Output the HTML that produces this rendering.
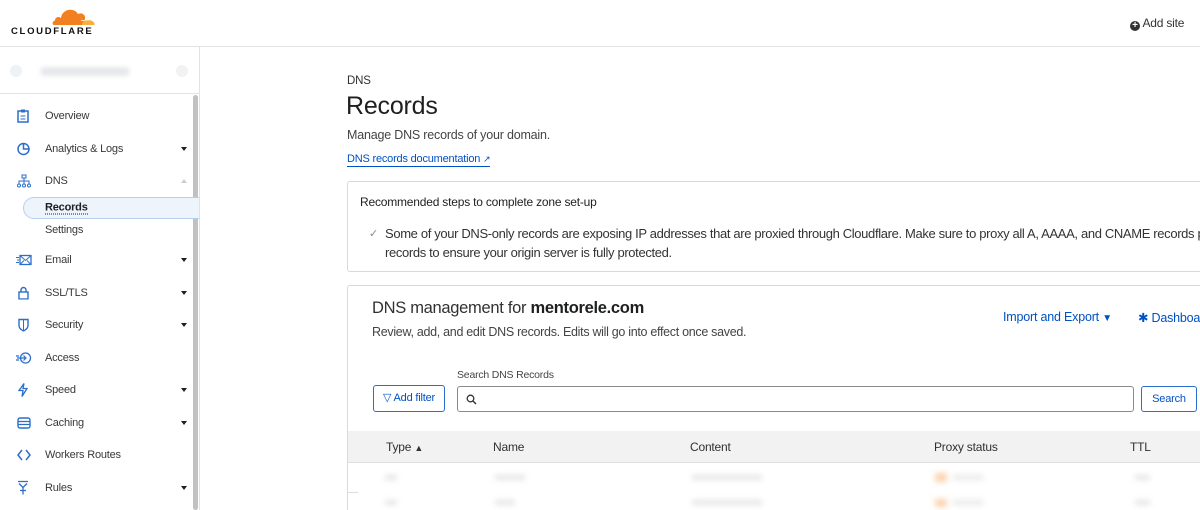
<!DOCTYPE html>
<html><head><meta charset="utf-8"><style>
*{box-sizing:border-box;margin:0;padding:0}
html,body{width:1200px;height:510px;overflow:hidden}
body{background:#fff;font-family:"Liberation Sans",sans-serif;color:#313131;position:relative;letter-spacing:-0.2px}
.abs{position:absolute;white-space:nowrap}
.hdr{position:absolute;left:0;top:0;width:1200px;height:47px;border-bottom:1px solid #e2e2e2}
.side{position:absolute;left:0;top:47px;width:200px;height:463px;border-right:1px solid #e2e2e2}
.nav{position:absolute;left:45px;font-size:11px;color:#36393a;transform:translateY(-50%)}
.ico{position:absolute;left:17px;transform:translateY(-50%)}
.car{position:absolute;left:181px;width:0;height:0;border-left:3.5px solid transparent;border-right:3.5px solid transparent;border-top:4px solid #1d1f20;transform:translateY(-50%)}
.blue{color:#0051c3}
</style></head><body>
<div class="hdr">
 <svg class="abs" style="left:52px;top:6px" width="44" height="20" viewBox="0 0 44 20"><path d="M2 19 C0 19 0 15 3 14.5 C3 11 7 10 9 12 C10 3 22 1 26 8 C30 6 34 9 33 13 C33 15 32 17 31 19 Z" fill="#f38020"/><path d="M30 19 C30 14 36 12 40 15 C43 16 43 19 42 19 Z" fill="#faae40"/><path d="M29 14.5 L41 13.5" stroke="#fff" stroke-width="0.8"/></svg>
 <div class="abs" style="left:11px;top:26px;font-size:9.5px;font-weight:bold;letter-spacing:1.7px;color:#111">CLOUDFLARE</div>
 <div class="abs" style="left:1130px;top:16px;font-size:12px;color:#333"><span style="display:inline-block;width:10px;height:10px;border-radius:50%;background:#333;color:#fff;font-size:10px;line-height:10px;text-align:center;font-weight:bold;vertical-align:-1px">+</span> Add site</div>
</div>
<div class="side">
 <div class="abs" style="left:0;top:0;width:199px;height:47px;border-bottom:1px solid #e2e2e2"></div>
 <div class="abs" style="left:10px;top:18px;width:12px;height:12px;border-radius:50%;background:#eef1f6"></div>
 <div class="abs" style="left:40px;top:20px;width:90px;height:9px;border-radius:5px;background:#e6e8ec;filter:blur(2px)"></div>
 <div class="abs" style="left:176px;top:18px;width:12px;height:12px;border-radius:50%;background:#f2f2f2"></div>
 <div class="abs" style="left:193px;top:48px;width:5px;height:415px;border-radius:3px;background:#c1c1c1"></div>
</div>
<div class="abs" style="left:23px;top:197px;width:176px;height:22px;border:1px solid #b8cff0;border-right:none;border-radius:11px 0 0 11px;background:#eef4fc"></div>
<svg class="ico" style="top:116px" width="12" height="14" viewBox="0 0 12 14"><rect x="1" y="2" width="10" height="11" fill="none" stroke="#2c6ecb" stroke-width="1.5"/><rect x="4" y="0.5" width="4" height="3" fill="#2c6ecb"/><path d="M3.5 7h5M3.5 10h5" stroke="#2c6ecb"/></svg><div class="nav" style="top:116px">Overview</div>
<svg class="ico" style="top:149px" width="13" height="13" viewBox="0 0 13 13"><circle cx="6.5" cy="6.5" r="5.5" fill="none" stroke="#2c6ecb" stroke-width="1.5"/><path d="M6.5 1v5.5h5.5" fill="none" stroke="#2c6ecb" stroke-width="1.5"/></svg><div class="nav" style="top:149px">Analytics &amp; Logs</div><div class="car" style="top:149px"></div>
<svg class="ico" style="top:181px" width="14" height="13" viewBox="0 0 14 13"><rect x="5" y="0.5" width="4" height="3" fill="none" stroke="#2c6ecb"/><path d="M7 3.5v3M2 9V6.5h10V9M7 6.5V9" fill="none" stroke="#2c6ecb"/><circle cx="2" cy="11" r="1.5" fill="none" stroke="#2c6ecb"/><circle cx="7" cy="11" r="1.5" fill="none" stroke="#2c6ecb"/><circle cx="12" cy="11" r="1.5" fill="none" stroke="#2c6ecb"/></svg><div class="nav" style="top:181px">DNS</div><div class="car" style="top:181px;border-top:none;border-bottom:4px solid #cfcfcf"></div>
<div class="nav" style="top:208px;font-weight:bold;color:#1d1f20;border-bottom:1px dotted #1d1f20">Records</div>
<div class="nav" style="top:230px">Settings</div>
<svg class="ico" style="top:260px;left:16px" width="16" height="11" viewBox="0 0 16 11"><rect x="4" y="1" width="11" height="9" fill="none" stroke="#2c6ecb" stroke-width="1.3"/><path d="M4 1l5.5 5 5.5-5M4 10l4-4M15 10l-4-4M0 3h3M1 5.5h2M0 8h3" fill="none" stroke="#2c6ecb"/></svg><div class="nav" style="top:260px">Email</div><div class="car" style="top:260px"></div>
<svg class="ico" style="top:293px;left:18px" width="11" height="13" viewBox="0 0 11 13"><rect x="1" y="5.5" width="9" height="7" fill="none" stroke="#2c6ecb" stroke-width="1.4"/><path d="M3 5.5V3.5a2.5 2.5 0 0 1 5 0v2" fill="none" stroke="#2c6ecb" stroke-width="1.4"/></svg><div class="nav" style="top:293px">SSL/TLS</div><div class="car" style="top:293px"></div>
<svg class="ico" style="top:325px;left:18px" width="11" height="13" viewBox="0 0 11 13"><path d="M1 1h9v6c0 3-2.5 4.5-4.5 5.5C3.5 11.5 1 10 1 7z" fill="none" stroke="#2c6ecb" stroke-width="1.4"/><path d="M5.5 1v11" stroke="#2c6ecb"/></svg><div class="nav" style="top:325px">Security</div><div class="car" style="top:325px"></div>
<svg class="ico" style="top:358px;left:16px" width="16" height="12" viewBox="0 0 16 12"><circle cx="9.5" cy="6" r="5" fill="none" stroke="#2c6ecb" stroke-width="1.3"/><path d="M1 6h9M7.5 3.5L10 6 7.5 8.5M0 4h3M0 8h3" fill="none" stroke="#2c6ecb" stroke-width="1.2"/></svg><div class="nav" style="top:358px">Access</div>
<svg class="ico" style="top:390px;left:18px" width="10" height="15" viewBox="0 0 10 15"><path d="M6 1L1 8h4l-1 6 5-8H5z" fill="none" stroke="#2c6ecb" stroke-width="1.3"/></svg><div class="nav" style="top:390px">Speed</div><div class="car" style="top:390px"></div>
<svg class="ico" style="top:423px" width="14" height="12" viewBox="0 0 14 12"><rect x="1" y="1" width="12" height="10" rx="2" fill="none" stroke="#2c6ecb" stroke-width="1.4"/><path d="M1 4.5h12M1 7.5h12" stroke="#2c6ecb" stroke-width="1.2"/></svg><div class="nav" style="top:423px">Caching</div><div class="car" style="top:423px"></div>
<svg class="ico" style="top:455px" width="14" height="12" viewBox="0 0 14 12"><path d="M5 1L1 6l4 5M9 1l4 5-4 5" fill="none" stroke="#2c6ecb" stroke-width="1.5"/></svg><div class="nav" style="top:455px">Workers Routes</div>
<svg class="ico" style="top:488px" width="12" height="15" viewBox="0 0 12 15"><path d="M1 1h10M2 3l4 4 4-4M6 7v7M3 10h6" fill="none" stroke="#2c6ecb" stroke-width="1.3"/></svg><div class="nav" style="top:488px">Rules</div><div class="car" style="top:488px"></div>

<div class="abs" style="left:347px;top:75px;font-size:11.5px;color:#313131">DNS</div>
<div class="abs" style="left:346px;top:92px;font-size:25px;color:#1d1f20">Records</div>
<div class="abs" style="left:347px;top:128px;font-size:12.5px;color:#444">Manage DNS records of your domain.</div>
<div class="abs blue" style="left:347px;top:153px;font-size:11px;border-bottom:1px solid #0051c3;line-height:13px">DNS records documentation <span style="font-size:9px">&#x2197;</span></div>

<div class="abs" style="left:347px;top:181px;width:870px;height:91px;border:1px solid #d9d9d9;border-radius:3px"></div>
<div class="abs" style="left:360px;top:195px;font-size:12px;color:#222">Recommended steps to complete zone set-up</div>
<div class="abs" style="left:369px;top:227px;font-size:11px;color:#888">&#x2713;</div>
<div class="abs" style="left:385px;top:226px;font-size:13px;color:#333;letter-spacing:-0.35px">Some of your DNS-only records are exposing IP addresses that are proxied through Cloudflare. Make sure to proxy all A, AAAA, and CNAME records p</div>
<div class="abs" style="left:385px;top:245px;font-size:13px;color:#333;letter-spacing:-0.35px">records to ensure your origin server is fully protected.</div>

<div class="abs" style="left:347px;top:285px;width:870px;height:225px;border:1px solid #d9d9d9;border-bottom:none;border-radius:3px 3px 0 0"></div>
<div class="abs" style="left:372px;top:299px;font-size:16.5px;color:#313131;letter-spacing:-0.3px">DNS management for <b style="color:#1d1f20">mentorele.com</b></div>
<div class="abs" style="left:372px;top:325px;font-size:12.5px;color:#444;letter-spacing:-0.3px">Review, add, and edit DNS records. Edits will go into effect once saved.</div>
<div class="abs blue" style="left:1003px;top:310px;font-size:12.5px;letter-spacing:-0.2px">Import and Export <span style="font-size:10px">&#x25BC;</span></div>
<div class="abs blue" style="left:1138px;top:310px;font-size:12.5px;letter-spacing:-0.2px">&#x2731; Dashboard</div>

<div class="abs" style="left:457px;top:369px;font-size:10.5px;color:#444">Search DNS Records</div>
<div class="abs blue" style="left:373px;top:385px;width:72px;height:27px;border:1px solid #2c6ecb;border-radius:3px;font-size:11px;line-height:25px;text-align:center">&#x25BD; Add filter</div>
<div class="abs" style="left:457px;top:386px;width:677px;height:26px;border:1px solid #8a8a8a;border-radius:3px"></div>
<svg class="abs" style="left:466px;top:394px" width="11" height="11" viewBox="0 0 11 11"><circle cx="4.5" cy="4.5" r="3.3" fill="none" stroke="#333" stroke-width="1.3"/><path d="M7 7l3 3" stroke="#333" stroke-width="1.4"/></svg>
<div class="abs blue" style="left:1141px;top:386px;width:56px;height:26px;border:1px solid #2c6ecb;border-radius:3px;font-size:11px;line-height:24px;text-align:center">Search</div>

<div class="abs" style="left:348px;top:431px;width:852px;height:32px;background:#f2f2f2;border-bottom:1px solid #e0e0e0"></div>
<div class="abs" style="left:386px;top:440px;font-size:12px;color:#313131">Type <span style="font-size:9px">&#x25B2;</span></div>
<div class="abs" style="left:493px;top:440px;font-size:12px;color:#313131">Name</div>
<div class="abs" style="left:690px;top:440px;font-size:12px;color:#313131">Content</div>
<div class="abs" style="left:934px;top:440px;font-size:12px;color:#313131">Proxy status</div>
<div class="abs" style="left:1130px;top:440px;font-size:12px;color:#313131">TTL</div>
<div style="filter:blur(3px)">
<div class="abs" style="left:385px;top:475px;width:12px;height:5px;background:#e4e4e4"></div>
<div class="abs" style="left:495px;top:475px;width:30px;height:5px;background:#e4e4e4"></div>
<div class="abs" style="left:692px;top:475px;width:70px;height:5px;background:#e4e4e4"></div>
<div class="abs" style="left:935px;top:473px;width:12px;height:9px;background:#fbd3ad"></div>
<div class="abs" style="left:953px;top:475px;width:30px;height:5px;background:#e8e8e8"></div>
<div class="abs" style="left:1135px;top:475px;width:15px;height:5px;background:#e4e4e4"></div>
<div class="abs" style="left:385px;top:500px;width:12px;height:5px;background:#e4e4e4"></div>
<div class="abs" style="left:495px;top:500px;width:20px;height:5px;background:#e4e4e4"></div>
<div class="abs" style="left:692px;top:500px;width:70px;height:5px;background:#e4e4e4"></div>
<div class="abs" style="left:935px;top:499px;width:12px;height:8px;background:#fbd3ad"></div>
<div class="abs" style="left:953px;top:500px;width:30px;height:5px;background:#e8e8e8"></div>
<div class="abs" style="left:1135px;top:500px;width:15px;height:5px;background:#e4e4e4"></div>
</div>
<div class="abs" style="left:348px;top:492px;width:10px;height:1px;background:#ddd"></div>
</body></html>
